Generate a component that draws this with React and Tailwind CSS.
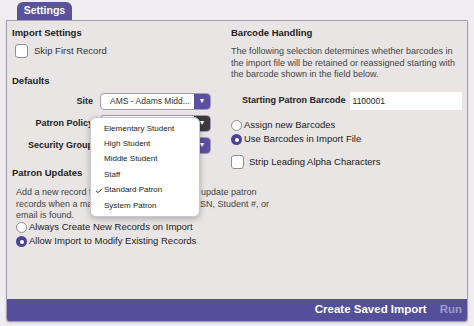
import { Check } from "lucide-react";

const menuItems = [
  "Elementary Student",
  "High Student",
  "Middle Student",
  "Staff",
  "Standard Patron",
  "System Patron",
];

function Checkbox() {
  return <span className="block h-[14px] w-[13px] shrink-0 rounded-[3px] border border-[#8f8c94] bg-white" />;
}

function Radio({ checked }) {
  if (checked) {
    return (
      <span className="flex h-[11px] w-[11px] shrink-0 items-center justify-center rounded-full bg-[#4a4396]">
        <span className="h-[4px] w-[4px] rounded-full bg-white" />
      </span>
    );
  }
  return <span className="block h-[11px] w-[11px] shrink-0 rounded-full border border-[#8f8c94] bg-white" />;
}

function Select({ label, value, dark }) {
  return (
    <div className="mt-[5px] flex h-[17px] items-center">
      <span className="w-[81px] text-right text-[9px] font-bold text-[#222]">{label}</span>
      <div className="ml-[7px] flex h-[17px] w-[111px] overflow-hidden rounded-[4px] border border-[#a29db8] bg-white">
        <span className="flex-1 truncate pl-[9px] text-[8.5px] leading-[15px] text-[#333]">{value}</span>
        <span
          className={`flex w-[16px] items-center justify-center text-[7px] text-white ${dark ? "bg-[#3b3a3d]" : "bg-[#5a4fa3]"}`}
        >
          ▼
        </span>
      </div>
    </div>
  );
}

export default function App() {
  return (
    <div className="h-[326px] w-[474px] overflow-hidden bg-[#efedef] pt-[2px] font-['Liberation_Sans',Arial,sans-serif] text-[#222]">
      <div className="ml-[17px] flex h-[18px] w-[55px] items-center justify-center rounded-t-[6px] bg-[#5a529e] text-[10.5px] font-bold text-white">
        Settings
      </div>

      <div className="relative ml-[6px] flex h-[302px] w-[462px] flex-col overflow-hidden rounded-b-[3px] border border-[#a39fb6] bg-[#e8e5e4] shadow-[0_1px_2px_rgba(0,0,0,0.15)]">
        <div className="flex flex-1">
          {/* left column */}
          <div className="w-[224px] shrink-0 pl-[5px] pt-[6px]">
            <h3 className="text-[9.5px] leading-[12px] font-bold">Import Settings</h3>
            <div className="mt-[5px] flex h-[14px] items-center pl-[3px]">
              <Checkbox />
              <span className="ml-[6px] text-[9.5px] text-[#333]">Skip First Record</span>
            </div>

            <h3 className="mt-[17px] text-[9.5px] leading-[12px] font-bold">Defaults</h3>
            <div className="mt-[6px]">
              <Select label="Site" value="AMS - Adams Midd..." />
              <Select label="Patron Policy" value="" dark />
              <Select label="Security Group" value="" />
            </div>

            <h3 className="mt-[13px] text-[9.5px] leading-[12px] font-bold">Patron Updates</h3>
            <div className="mt-[8px] w-[260px] pl-[4px] text-[9px] leading-[11.5px] whitespace-nowrap text-[#444]">
              <div className="flex">
                <span className="w-[185px] shrink-0">Add a new record f</span>
                <span className="shrink-0">update patron</span>
              </div>
              <div className="flex">
                <span className="w-[184px] shrink-0">records when a ma</span>
                <span className="shrink-0">SN, Student #, or</span>
              </div>
              <div>email is found.</div>
            </div>
            <div className="mt-[-1px] flex h-[14px] items-center gap-[2px] pl-[4px]">
              <Radio />
              <span className="text-[9.5px] text-[#222]">Always Create New Records on Import</span>
            </div>
            <div className="flex h-[14px] items-center gap-[2px] pl-[4px]">
              <Radio checked />
              <span className="text-[9.5px] text-[#222]">Allow Import to Modify Existing Records</span>
            </div>
          </div>

          {/* right column */}
          <div className="flex-1 pt-[6px]">
            <h3 className="text-[9.5px] leading-[12px] font-bold">Barcode Handling</h3>
            <p className="mt-[7px] text-[9px] leading-[11.5px] text-[#444]">
              The following selection determines whether barcodes in
              <br />
              the import file will be retained or reassigned starting with
              <br />
              the barcode shown in the field below.
            </p>
            <div className="mt-[11px] flex h-[18px] items-center pl-[11px]">
              <span className="text-[9px] font-bold text-[#222]">Starting Patron Barcode</span>
              <div className="ml-[4px] h-[18px] w-[112px] bg-white pl-[3px] text-[8.5px] leading-[18px] text-[#222]">
                1100001
              </div>
            </div>
            <div className="mt-[9px] flex h-[14px] items-center gap-[2px]">
              <Radio />
              <span className="text-[9.5px] text-[#222]">Assign new Barcodes</span>
            </div>
            <div className="flex h-[14px] items-center gap-[2px]">
              <Radio checked />
              <span className="text-[9.5px] text-[#222]">Use Barcodes in Import File</span>
            </div>
            <div className="mt-[8px] flex h-[15px] items-center">
              <Checkbox />
              <span className="ml-[5px] text-[9.5px] text-[#222]">Strip Leading Alpha Characters</span>
            </div>
          </div>
        </div>

        <div className="flex h-[22px] items-center justify-end gap-[13px] bg-[#544f9b] pr-[5px] text-[11.5px] font-bold">
          <span className="text-white">Create Saved Import</span>
          <span className="text-[#9e9ac9]">Run</span>
        </div>

        {/* open Patron Policy menu */}
        <div className="absolute top-[96px] left-[83px] w-[110px] rounded-[6px] border border-[#c9c6cf] bg-white py-[3px] shadow-[0_2px_6px_rgba(0,0,0,0.25)]">
          {menuItems.map((item) => (
            <div key={item} className="relative flex h-[15.4px] items-center pl-[13px] text-[8px] text-[#222]">
              {item === "Standard Patron" && (
                <Check size={8} strokeWidth={3} className="absolute left-[4px] top-[4px]" />
              )}
              {item}
            </div>
          ))}
        </div>
      </div>
    </div>
  );
}
